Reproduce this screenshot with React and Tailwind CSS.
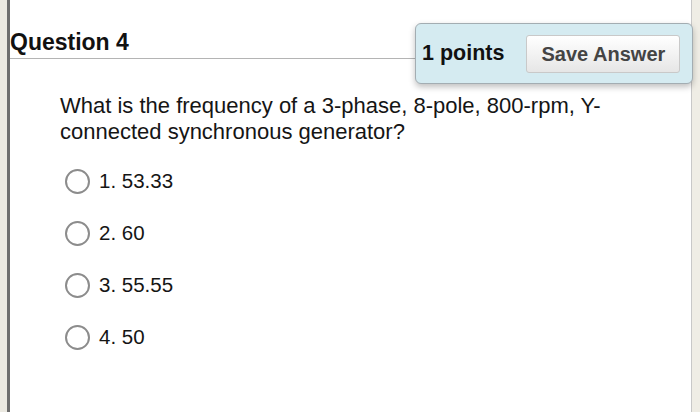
import { useState } from "react";

const options = ["53.33", "60", "55.55", "50"];

function Radio({ checked, onClick }) {
	return (
		<span
			onClick={onClick}
			className="flex h-[25px] w-[25px] shrink-0 items-center justify-center rounded-full border-[2px] border-[#8c8c8c] bg-white"
		>
			{checked && <span className="h-[11px] w-[11px] rounded-full bg-[#555]" />}
		</span>
	);
}

export default function App() {
	const [picked, setPicked] = useState(null);

	return (
		<div
			className="relative flex h-[412px] w-[700px] overflow-hidden bg-white text-black"
			style={{ fontFamily: '"Liberation Sans", Arial, sans-serif' }}
		>
			{/* left gutter */}
			<div className="w-[7px] shrink-0 bg-[#ebe9e1]" />
			<div className="w-[3px] shrink-0 bg-[#6e6e6e]" />

			<div className="flex-1">
				<div className="pt-[29px]">
					<h2 className="text-[23px] font-bold leading-[26px] text-[#111]">
						Question 4
					</h2>
					<div className="mt-[3px] h-px w-[406px] bg-[#b4b4b4]" />
				</div>

				<p className="ml-[50px] mt-[34px] w-[610px] text-[22px] leading-[26px] text-[#151515]">
					What is the frequency of a 3-phase, 8-pole, 800-rpm, Y-connected synchronous generator?
				</p>

				<ul className="ml-[55px] mt-[24px] flex flex-col gap-[27px]">
					{options.map((o, i) => (
						<li key={o} className="flex h-[25px] items-center gap-[9px]">
							<Radio checked={picked === i} onClick={() => setPicked(i)} />
							<span className="text-[20.5px] leading-none text-[#151515]">
								{i + 1}. {o}
							</span>
						</li>
					))}
				</ul>
			</div>

			{/* right gutter */}
			<div className="flex w-[9px] shrink-0 flex-col">
				<div className="flex flex-1">
					<div className="w-px bg-[#c8c8c8]" />
					<div className="flex-1 bg-[#efede5]" />
				</div>
			</div>

			{/* points / save popup */}
			<div className="absolute left-[415px] top-[23px] flex h-[61px] w-[278px] items-center rounded-[6px] border border-[#a3adb2] bg-[#d5ebf1] pl-[6px] shadow-[0_3px_6px_rgba(0,0,0,0.25)]">
				<span className="text-[21.5px] font-bold text-[#111]">1 points</span>
				<button className="ml-[22px] h-[38px] w-[154px] rounded-[3px] border border-[#c9c9c9] bg-gradient-to-b from-white to-[#e6e6e6] text-[20px] font-bold text-[#444]">
					Save Answer
				</button>
			</div>
		</div>
	);
}
